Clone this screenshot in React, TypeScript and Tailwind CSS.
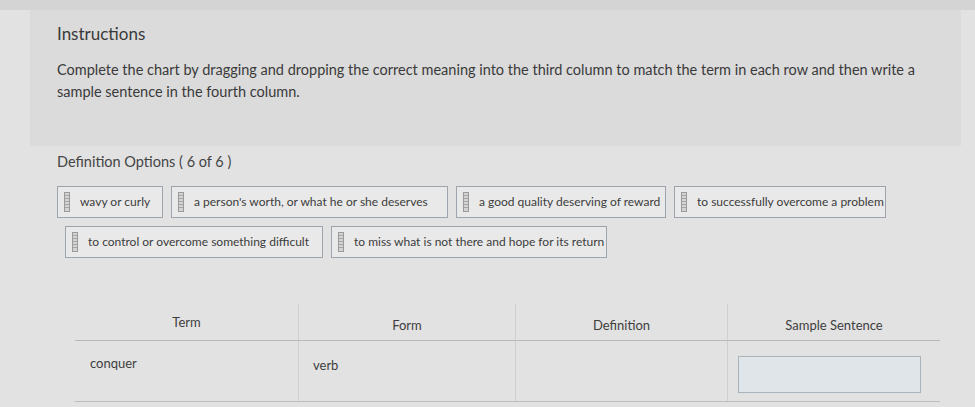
const font = { fontFamily: "Lato, 'Open Sans', sans-serif" };

function Handle() {
  return (
    <svg width="6" height="20" viewBox="0 0 6 20" className="shrink-0">
      <rect x="0.5" y="0.5" width="5" height="19" fill="#d4d4d4" stroke="#9a9a9a" />
      {[3, 6, 9, 12, 15].map((y) => (
        <g key={y}>
          <rect x="1.5" y={y} width="1" height="1" fill="#777" />
          <rect x="3.5" y={y} width="1" height="1" fill="#777" />
        </g>
      ))}
    </svg>
  );
}

function Chip({ text, w }: { text: string; w: string }) {
  return (
    <div
      className={`flex h-[32px] items-center gap-[10px] border border-[#9ea4ab] bg-[#e9e9e9] pl-[6px] pr-[6px] text-[12px] text-[#3c3c3c] ${w}`}
    >
      <Handle />
      <span className="whitespace-nowrap">{text}</span>
    </div>
  );
}

export default function App() {
  return (
    <div className="h-[407px] w-[975px] overflow-hidden bg-[#e2e2e2]" style={font}>
      <div className="h-[10px] bg-[#d4d4d4]" />
      <div className="ml-[30px] mr-[14px] h-[136px] bg-[#dbdbdb] pl-[27px] pt-[11px] text-[#3a3a3a]">
        <div className="text-[17px]">Instructions</div>
        <p className="mt-[12px] w-[870px] text-[14.5px] leading-[22px]">
          Complete the chart by dragging and dropping the correct meaning into the third column to match the term in
          each row and then write a sample sentence in the fourth column.
        </p>
      </div>
      <div className="pl-[57px] pt-[5px]">
        <div className="text-[14.5px] text-[#444]">Definition Options ( 6 of 6 )</div>
        <div className="mt-[13px] flex gap-[8px]">
          <Chip text="wavy or curly" w="w-[106px]" />
          <Chip text="a person's worth, or what he or she deserves" w="w-[277px]" />
          <Chip text="a good quality deserving of reward" w="w-[210px]" />
          <Chip text="to successfully overcome a problem" w="w-[212px]" />
        </div>
        <div className="mt-[8px] flex gap-[8px] pl-[8px]">
          <Chip text="to control or overcome something difficult" w="w-[258px]" />
          <Chip text="to miss what is not there and hope for its return" w="w-[276px]" />
        </div>
        <div className="ml-[18px] mt-[46px] w-[865px] pb-[20px] text-[13px] text-[#3e3e3e]">
          <div className="grid grid-cols-[223px_217px_212px_213px] border-b border-[#b8b8b8]">
            <div className="pb-[8px] pt-[9px] text-center">Term</div>
            <div className="border-l border-[#cfcfcf] pb-[5px] pt-[12px] text-center">Form</div>
            <div className="border-l border-[#cfcfcf] pb-[5px] pt-[12px] text-center">Definition</div>
            <div className="border-l border-[#cfcfcf] pb-[5px] pt-[12px] text-center">Sample Sentence</div>
          </div>
          <div className="grid h-[61px] grid-cols-[223px_217px_212px_213px] border-b border-[#bdbdbd]">
            <div className="pl-[15px] pt-[13px]">conquer</div>
            <div className="border-l border-[#cfcfcf] pl-[14px] pt-[15px]">verb</div>
            <div className="border-l border-[#cfcfcf]" />
            <div className="border-l border-[#cfcfcf] pl-[10px] pt-[15px]">
              <div className="h-[37px] w-[183px] border border-[#a9b3ba] bg-[#dfe5e8]" />
            </div>
          </div>
        </div>
      </div>
    </div>
  );
}
